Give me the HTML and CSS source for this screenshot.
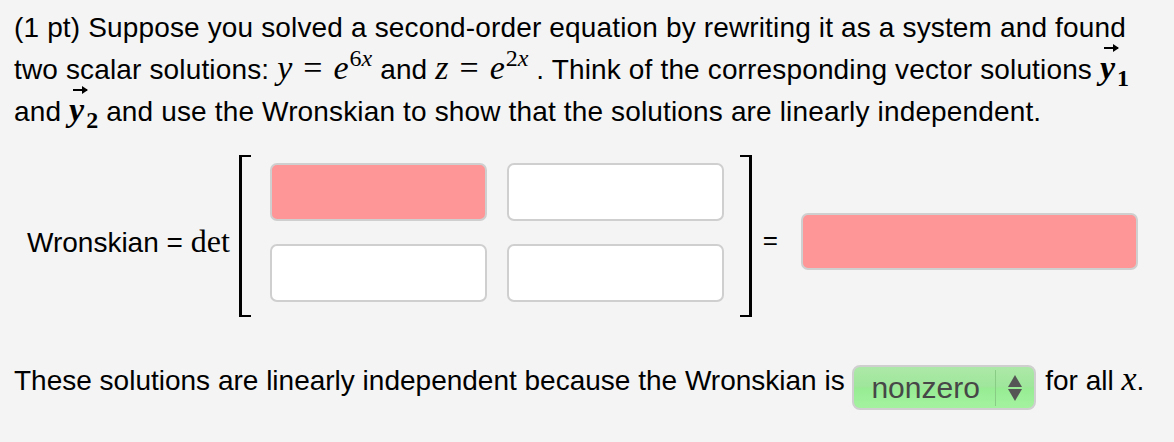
FILE: index.html
```html
<!DOCTYPE html>
<html lang="en">
<head>
    <meta charset="UTF-8">
    <meta name="viewport" content="width=device-width, initial-scale=1.0">
    <title>Wronskian Problem</title>
    <link rel="stylesheet" href="styles.css">
</head>
<body>
    <div class="problem">
        <p class="prompt">
            (1 pt) Suppose you solved a second-order equation by rewriting it as a system and found<br>
            two scalar solutions: <span class="math"><i>y</i><span class="op">=</span><i>e</i><sup>6<i>x</i></sup></span> and
            <span class="math"><i>z</i><span class="op">=</span><i>e</i><sup>2<i>x</i></sup></span> . Think of the corresponding vector solutions
            <span class="math"><span class="vec">y</span><sub>1</sub></span><br>
            and <span class="math"><span class="vec">y</span><sub>2</sub></span> and use the Wronskian to show that the solutions are linearly independent.
        </p>

        <div class="wronskian">
            <span class="label">Wronskian = <span class="det">det</span></span>
            <span class="bracket left"></span>
            <div class="matrix">
                <input type="text" class="cell wrong">
                <input type="text" class="cell">
                <input type="text" class="cell">
                <input type="text" class="cell">
            </div>
            <span class="bracket right"></span>
            <span class="equals">=</span>
            <input type="text" class="answer wrong">
        </div>

        <p class="conclusion">
            These solutions are linearly independent because the Wronskian is
            <span class="select-wrap">
                <select class="choice correct">
                    <option>nonzero</option>
                    <option>zero</option>
                </select>
                <span class="arrows">
                    <svg width="16" height="28" viewBox="0 0 16 28">
                        <path d="M8 1 L15 13 L1 13 Z" fill="#555"/>
                        <path d="M1 15 L15 15 L8 27 Z" fill="#555"/>
                    </svg>
                </span>
            </span>
            for all <span class="math"><i>x</i></span>.
        </p>
    </div>
</body>
</html>
```

FILE: styles.css
```css
body {
    background-color: #f4f4f4;
    color: #000;
    font-family: 'Liberation Sans', Arial, sans-serif;
    font-size: 28px;
    margin: 0;
    padding: 0 14px;
}
.prompt {
    margin: 8px 0 0;
    line-height: 40px;
    letter-spacing: 0.15px;
    white-space: nowrap;
}
.math {
    font-family: 'Liberation Serif', 'Times New Roman', serif;
    font-size: 34px;
    letter-spacing: 0;
}
.math .op {
    margin: 0 11px;
}
.math sup {
    font-size: 24px;
    vertical-align: baseline;
    position: relative;
    top: -13px;
    line-height: 0;
    margin-left: 1px;
}
.math sub {
    font-size: 24px;
    font-weight: bold;
    vertical-align: -7px;
    line-height: 0;
    margin-left: 2px;
}
/* vector arrow: a shaft plus a small head over the letter */
.vec {
    position: relative;
    font-weight: bold;
    font-style: italic;
}
.vec::before {
    content: "";
    position: absolute;
    left: 4px;
    top: -2px;
    width: 14px;
    height: 2px;
    background: #000;
}
.vec::after {
    content: "";
    position: absolute;
    left: 13px;
    top: -5px;
    border-left: 6px solid #000;
    border-top: 4px solid transparent;
    border-bottom: 4px solid transparent;
}

.wronskian {
    display: flex;
    align-items: center;
    margin: 23px 0 0 13px;
}
.det {
    font-family: 'Liberation Serif', 'Times New Roman', serif;
    font-size: 32px;
}
.bracket {
    width: 9px;
    height: 158px;
    border: 2px solid #000;
    margin-bottom: 10px;
}
.bracket.left {
    border-left-width: 3px;
    border-right: none;
    margin-left: 9px;
}
.bracket.right {
    border-right-width: 3px;
    border-left: none;
}
.matrix {
    display: grid;
    grid-template-columns: 217px 217px;
    grid-auto-rows: 58px;
    column-gap: 20px;
    row-gap: 23px;
    margin: 0 16px 17px 19px;
}
.cell, .answer {
    box-sizing: border-box;
    border: 2px solid #cfcfcf;
    border-radius: 7px;
    background-color: #fff;
    font-size: 20px;
    padding: 4px 8px;
}
.cell.wrong, .answer.wrong {
    background-color: #fe9596;
}
.equals {
    font-size: 26px;
    margin: 0 23px 0 11px;
    padding-bottom: 2px;
}
.answer {
    width: 337px;
    height: 57px;
}

.conclusion {
    margin: 29px 0 0;
    line-height: 44px;
    white-space: nowrap;
}
.select-wrap {
    position: relative;
    display: inline-flex;
    vertical-align: middle;
    margin: 9px 1px 0 0;
}
.choice {
    appearance: none;
    -webkit-appearance: none;
    width: 184px;
    height: 45px;
    box-sizing: border-box;
    border: 2px solid #cfcfcf;
    border-radius: 8px;
    background: linear-gradient(#ace9a8, #9fe69b 48%, #97ec93 52%, #a4f2a0);
    color: #474747;
    font-family: 'Liberation Sans', Arial, sans-serif;
    font-size: 30px;
    line-height: 39px;
    padding: 0 0 0 17px;
}
.arrows {
    position: absolute;
    right: 2px;
    top: 5px;
    bottom: 4px;
    width: 38px;
    display: flex;
    align-items: center;
    justify-content: center;
    border-left: 1px solid #88cc85;
    pointer-events: none;
}
```
